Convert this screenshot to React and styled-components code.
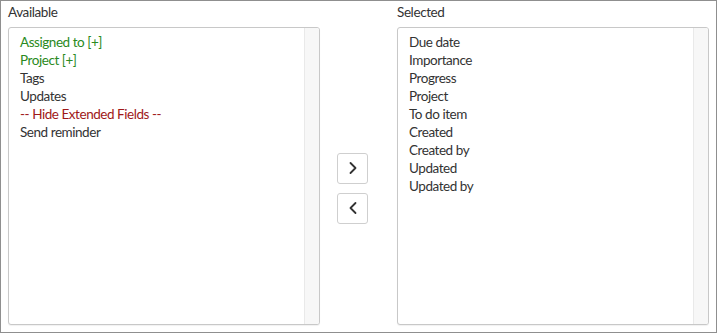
import React from "react";
import styled, { createGlobalStyle } from "styled-components";
import { ChevronRight, ChevronLeft } from "lucide-react";

const Global = createGlobalStyle`
  html, body { margin: 0; padding: 0; background: #fff; }
  body { font-family: Lato, "Liberation Sans", sans-serif; color: #333; }
  * { box-sizing: border-box; }
`;

const Frame = styled.div`
  width: 717px;
  height: 333px;
  border: 1px solid #8f8f8f;
  padding: 2px 7px 7px 7px;
  display: grid;
  grid-template-columns: 312px 1fr 312px;
  grid-template-rows: 24px 1fr;
`;

const Label = styled.div`
  font-size: 13.5px;
  line-height: 18px;
  letter-spacing: -0.4px;
  color: #333;
`;

const ListBox = styled.div`
  grid-row: 2;
  border: 1px solid #c8c8c8;
  border-radius: 3px;
  box-shadow: 0 1px 1px rgba(0,0,0,0.06);
  display: flex;
  overflow: hidden;
  background: #fff;
`;

const Items = styled.ul`
  list-style: none;
  margin: 0;
  padding: 5px 0 0 11px;
  flex: 1;
`;

const Item = styled.li`
  font-size: 13.5px;
  line-height: 18px;
  letter-spacing: -0.45px;
  color: ${(p) => (p.$tone === "add" ? "#2a8a22" : p.$tone === "hide" ? "#a01818" : "#333")};
  white-space: nowrap;
`;

const Track = styled.div`
  width: 15px;
  background: #f7f7f7;
  border-left: 1px solid #e9e9e9;
`;

const Middle = styled.div`
  grid-row: 2;
  display: flex;
  flex-direction: column;
  align-items: flex-start;
  justify-content: center;
  gap: 9px;
  padding: 24px 0 0 17px;
`;

const MoveButton = styled.button`
  width: 31px;
  height: 31px;
  border: 1px solid #cfcfcf;
  border-radius: 3px;
  background: #fff;
  color: #333;
  display: flex;
  align-items: center;
  justify-content: center;
  padding: 0;
  cursor: pointer;
`;

const available = [
  { t: "Assigned to [+]", tone: "add" },
  { t: "Project [+]", tone: "add" },
  { t: "Tags" },
  { t: "Updates" },
  { t: "-- Hide Extended Fields --", tone: "hide" },
  { t: "Send reminder" },
];

const selected = [
  "Due date",
  "Importance",
  "Progress",
  "Project",
  "To do item",
  "Created",
  "Created by",
  "Updated",
  "Updated by",
];

export default function App() {
  return (
    <>
      <Global />
      <Frame>
        <Label>Available</Label>
        <div />
        <Label>Selected</Label>
        <ListBox>
          <Items>
            {available.map((i) => (
              <Item key={i.t} $tone={i.tone}>{i.t}</Item>
            ))}
          </Items>
          <Track />
        </ListBox>
        <Middle>
          <MoveButton aria-label="Add">
            <ChevronRight size={20} strokeWidth={2.2} />
          </MoveButton>
          <MoveButton aria-label="Remove">
            <ChevronLeft size={20} strokeWidth={2.2} />
          </MoveButton>
        </Middle>
        <ListBox>
          <Items>
            {selected.map((t) => (
              <Item key={t}>{t}</Item>
            ))}
          </Items>
          <Track />
        </ListBox>
      </Frame>
    </>
  );
}
